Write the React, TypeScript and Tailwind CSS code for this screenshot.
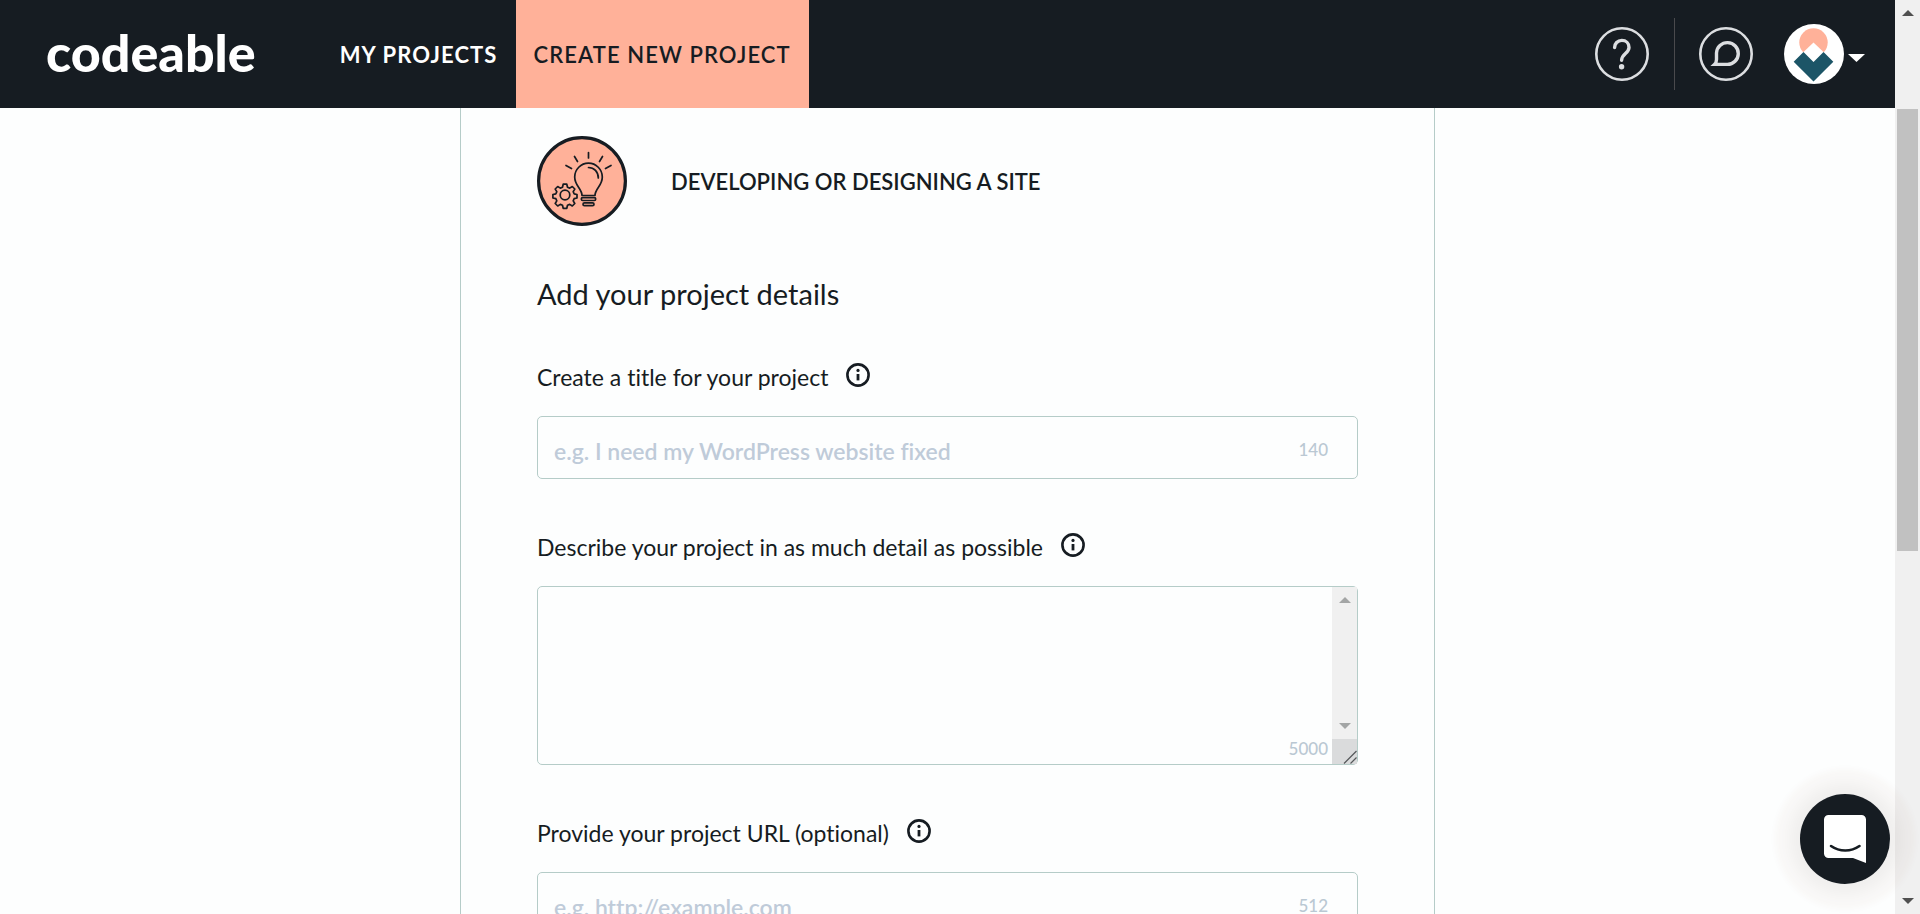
import React, { useState } from "react";

const InfoIcon: React.FC = () => (
  <svg className="h-6 w-6" viewBox="0 0 24 24" fill="none">
    <circle cx="12" cy="12" r="10.6" stroke="#161c22" strokeWidth="2.6" />
    <circle cx="12" cy="7.4" r="1.6" fill="#161c22" />
    <path d="M12 11v6.4" stroke="#161c22" strokeWidth="2.8" />
  </svg>
);

const HelpIcon: React.FC = () => (
  <svg className="h-[54px] w-[54px]" viewBox="0 0 54 54" fill="none">
    <circle cx="27" cy="27" r="25.7" stroke="#dcdee1" strokeWidth="2.6" />
    <path
      d="M19.6 20.6c0-4 3-7.2 7.2-7.2s7.2 3 7.2 7c0 5.8-7.4 6.3-7.4 12.8"
      stroke="#dcdee1"
      strokeWidth="3.4"
      strokeLinecap="round"
    />
    <circle cx="26.6" cy="39.7" r="2.7" fill="#dcdee1" />
  </svg>
);

const MessageIcon: React.FC = () => (
  <svg className="h-[54px] w-[54px]" viewBox="0 0 54 54" fill="none">
    <circle cx="27" cy="27" r="25.7" stroke="#dcdee1" strokeWidth="2.6" />
    <path
      d="M15.5 37.4c1.5-1.5 2-2.6 2-5V26a10.9 10.9 0 1 1 10.9 11.4z"
      stroke="#dcdee1"
      strokeWidth="3.4"
    />
  </svg>
);

const Avatar: React.FC = () => (
  <svg className="h-[60px] w-[60px]" viewBox="0 0 60 60">
    <circle cx="30" cy="30" r="30" fill="#fff" />
    <circle cx="29.5" cy="18.5" r="14.2" fill="#ffb199" />
    <path d="M29.5 18.5L40 28.5 29.5 39 19 28.5z" fill="#fff" />
    <path
      d="M19.5 28l10 10 10-10 9.8 9.8L29.5 57.5 9.7 37.8z"
      fill="#1c5567"
    />
  </svg>
);

const IdeaIcon: React.FC = () => (
  <svg
    className="h-[90px] w-[90px] shrink-0"
    viewBox="0 0 90 90"
    fill="none"
    stroke="#161c22"
    strokeWidth="1.7"
    strokeLinecap="round"
    strokeLinejoin="round"
  >
    <circle cx="45" cy="45" r="43.4" fill="#ffb199" strokeWidth="3.2" />
    {/* rays */}
    <path d="M51.5 16.5v5.5M37.5 20.5l3 5M65.5 20.5l-3 5M29 29.5l5.5 3M74 29.5l-5.5 3" />
    {/* bulb */}
    <path d="M45 59.5c0-7-7.3-9.5-7.3-18.5a13.8 13.8 0 0 1 27.6 0c0 9-7.3 11.5-7.3 18.5z" />
    <path d="M51.5 31.5c5.5 0 9.8 4.3 9.8 10.5" />
    <rect x="44.3" y="61.7" width="14.4" height="2.8" rx="1.4" />
    <rect x="46" y="66.8" width="11" height="2.8" rx="1.4" />
    {/* gear */}
    <circle cx="28" cy="59" r="4.8" />
    <path d="M26.2 48.2h3.6l.7 3 2.2.9 2.6-1.6 2.5 2.5-1.6 2.6.9 2.2 2.9.7v3.500l-2.900.7-.9 2.200 1.600 2.600-2.500 2.500-2.600-1.600-2.200.9-.7 3h-3.600l-.7-3-2.200-.9-2.600 1.600-2.500-2.500 1.600-2.600-.9-2.200-3-.7v-3.500l3-.7.9-2.200-1.600-2.600 2.500-2.500 2.600 1.600 2.200-.9z" />
  </svg>
);

const Arrow: React.FC<{ down?: boolean; color: string }> = ({
  down,
  color,
}) => (
  <svg className="h-1.5 w-3" viewBox="0 0 12 6">
    <path d={down ? "M0 0h12L6 6z" : "M0 6h12L6 0z"} fill={color} />
  </svg>
);

interface FieldProps {
  id: string;
  label: string;
  children: React.ReactNode;
}

const Field: React.FC<FieldProps> = ({ id, label, children }) => (
  <div>
    <div className="mb-[23px] flex items-start gap-[18px]">
      <label htmlFor={id} className="text-[23px] leading-8">
        {label}
      </label>
      <button type="button" aria-label="More info" className="mt-0.5">
        <InfoIcon />
      </button>
    </div>
    <div className="relative">{children}</div>
  </div>
);

const inputClass =
  "block h-[63px] w-full rounded-[5px] border border-[#b5ccc8] bg-transparent pt-1.5 pr-24 pl-4 text-[23px] font-semibold outline-none placeholder:text-[#bfcbd9]";

const counterClass =
  "pointer-events-none absolute right-[30px] text-[17px] leading-none font-medium text-[#bac8d3]";

const App: React.FC = () => {
  const [title, setTitle] = useState("");
  const [description, setDescription] = useState("");
  const [url, setUrl] = useState("");

  return (
    <div className="flex h-screen overflow-hidden bg-[#fdfefe] font-[Lato,sans-serif] text-[#161c22] [font-variant-ligatures:none]">
      <div className="flex min-w-0 flex-1 flex-col">
        <header className="flex h-[108px] shrink-0 items-center bg-[#161c22] pr-[30px] pl-[46px] text-white">
          <a href="#" className="pb-1 text-[52px] leading-none font-black">
            codeable
          </a>
          <nav className="flex flex-1 self-stretch pl-[66px] text-[22px] tracking-wider">
            <a href="#" className="flex items-center px-[18px] font-bold">
              MY PROJECTS
            </a>
            <a
              href="#"
              className="flex items-center bg-[#ffb199] px-[18px] font-semibold text-[#161c22]"
            >
              CREATE NEW PROJECT
            </a>
          </nav>
          <div className="flex items-center">
            <button type="button" aria-label="Help">
              <HelpIcon />
            </button>
            <div className="mr-6 ml-[25px] h-[72px] w-px bg-[#4a4a4d]" />
            <button type="button" aria-label="Messages">
              <MessageIcon />
            </button>
            <button
              type="button"
              aria-label="Account"
              className="ml-[31px] flex items-center gap-1"
            >
              <Avatar />
              <svg className="mt-2 h-2 w-[17px]" viewBox="0 0 17 8">
                <path d="M0 0h17L8.5 8z" fill="#fff" />
              </svg>
            </button>
          </div>
        </header>

        <main className="mx-auto min-h-0 w-full max-w-[975px] flex-1 overflow-hidden border-x border-[#b5ccc8] px-[76px] pt-7">
          <div className="flex items-center gap-11">
            <IdeaIcon />
            <h2 className="text-[22px] font-semibold">
              DEVELOPING OR DESIGNING A SITE
            </h2>
          </div>
          <h1 className="mt-[50px] text-[29px] leading-9">
            Add your project details
          </h1>

          <form className="mt-[49px] space-y-[52px]">
            <Field id="title" label="Create a title for your project">
              <input
                id="title"
                type="text"
                maxLength={140}
                value={title}
                onChange={(e) => setTitle(e.target.value)}
                placeholder="e.g. I need my WordPress website fixed"
                className={inputClass}
              />
              <span className={`${counterClass} bottom-[21px]`}>
                {140 - title.length}
              </span>
            </Field>

            <Field
              id="description"
              label="Describe your project in as much detail as possible"
            >
              <textarea
                id="description"
                maxLength={5000}
                value={description}
                onChange={(e) => setDescription(e.target.value)}
                className="block h-[179px] w-full resize-none rounded-[5px] border border-[#b5ccc8] bg-transparent py-4 pr-24 pl-4 text-[23px] outline-none"
              />
              <span className={`${counterClass} bottom-2`}>
                {5000 - description.length}
              </span>
              <div className="absolute inset-y-px right-px flex w-[25px] flex-col">
                <div className="flex flex-1 flex-col items-center justify-between bg-[#f0f0f0] py-2.5">
                  <Arrow color="#a3a5a5" />
                  <Arrow down color="#a3a5a5" />
                </div>
                <svg className="h-[25px] w-[25px]" viewBox="0 0 25 25">
                  <path d="M0 0h25v25H0z" fill="#dadbdc" />
                  <path
                    d="M12 24.5L24.5 12M18.5 24.5l6-6"
                    stroke="#55585a"
                    strokeWidth="1.2"
                  />
                </svg>
              </div>
            </Field>

            <Field id="url" label="Provide your project URL (optional)">
              <input
                id="url"
                type="text"
                maxLength={512}
                value={url}
                onChange={(e) => setUrl(e.target.value)}
                placeholder="e.g. http://example.com"
                className={inputClass}
              />
              <span className={`${counterClass} bottom-[21px]`}>
                {512 - url.length}
              </span>
            </Field>
          </form>
        </main>
      </div>

      {/* Page scrollbar */}
      <div className="flex w-[25px] shrink-0 flex-col items-center bg-[#f0f0f0] py-2.5">
        <Arrow color="#505050" />
        <div className="flex w-full flex-1 flex-col px-0.5 pt-[93px]">
          <div className="h-[56%] bg-[#c1c1c1]" />
        </div>
        <Arrow down color="#505050" />
      </div>

      <button
        type="button"
        aria-label="Open chat"
        className="fixed right-[30px] bottom-[30px] h-[90px] w-[90px] rounded-full bg-[#161c22] shadow-[0_0_14px_10px_rgba(22,28,34,0.04),0_0_6px_25px_rgba(120,60,30,0.03)]"
      >
        <svg className="h-[90px] w-[90px]" viewBox="0 0 90 90" fill="none">
          <path
            d="M28.5 21h33a4.5 4.5 0 0 1 4.5 4.5V69l-13-5H28.5a4.5 4.5 0 0 1-4.5-4.5v-34a4.5 4.5 0 0 1 4.5-4.5z"
            fill="#fff"
          />
          <path
            d="M31 52c8.500 6 20 6 28.500 0"
            stroke="#161c22"
            strokeWidth="2.6"
            strokeLinecap="round"
          />
        </svg>
      </button>
    </div>
  );
};

export default App;
